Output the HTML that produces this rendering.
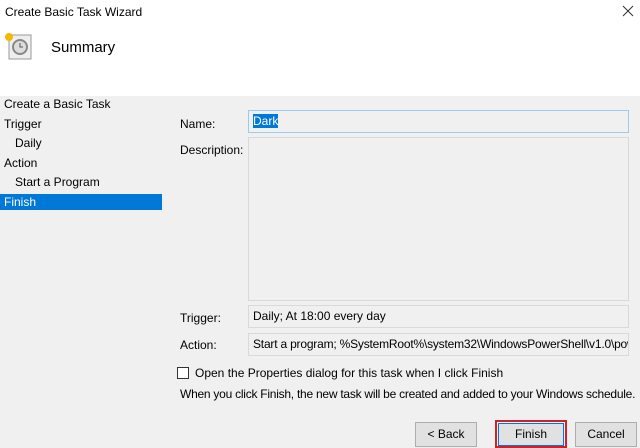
<!DOCTYPE html><html><head><style>
body{margin:0;width:640px;height:448px;overflow:hidden;background:#f0f0f0;font-family:"Liberation Sans",sans-serif;font-size:12px;color:#000;position:relative}
.a{position:absolute;white-space:nowrap}
.f{position:absolute;left:248px;width:381px;border:1px solid #d9d9d9;background:#f0f0f0;box-sizing:border-box;padding:3px 4px;white-space:nowrap;overflow:hidden}
.b{position:absolute;top:422px;height:25px;border:1px solid #adadad;background:#e1e1e1;box-sizing:border-box;text-align:center;line-height:23px}
</style></head><body>
<div class="a" style="left:0;top:0;width:640px;height:96px;background:#fff"></div>
<div class="a" style="left:5px;top:5px;font-size:12px">Create Basic Task Wizard</div>
<svg class="a" style="left:622px;top:5px" width="12" height="12"><path d="M1 1L11 11M11 1L1 11" stroke="#333" stroke-width="1"/></svg>
<svg class="a" style="left:3px;top:31px" width="30" height="30"><rect x="6" y="4" width="22" height="24" fill="#eee" stroke="#999"/><circle cx="17" cy="16" r="7" fill="#ddd" stroke="#888" stroke-width="2"/><path d="M17 12v4h3" stroke="#555" fill="none"/><circle cx="6" cy="6" r="4" fill="#f5b800"/></svg>
<div class="a" style="left:51px;top:39px;font-size:15px">Summary</div>
<div class="a" style="left:4px;top:97px">Create a Basic Task</div>
<div class="a" style="left:4px;top:117px">Trigger</div>
<div class="a" style="left:15px;top:136px">Daily</div>
<div class="a" style="left:4px;top:156px">Action</div>
<div class="a" style="left:15px;top:175px">Start a Program</div>
<div class="a" style="left:0;top:194px;width:162px;height:16px;background:#0078d7;color:#fff;line-height:16px;padding-left:4px;box-sizing:border-box">Finish</div>
<div class="a" style="left:180px;top:117px">Name:</div>
<div class="a" style="left:180px;top:143px">Description:</div>
<div class="a" style="left:180px;top:311px">Trigger:</div>
<div class="a" style="left:180px;top:338px">Action:</div>
<div class="f" style="top:110px;height:23px;border-color:#9ccbee"><span style="background:#0078d7;color:#fff">Dark</span></div>
<div class="f" style="top:137px;height:164px"></div>
<div class="f" style="top:305px;height:23px">Daily; At 18:00 every day</div>
<div class="f" style="top:333px;height:23px;letter-spacing:-0.2px">Start a program; %SystemRoot%\system32\WindowsPowerShell\v1.0\powershell.exe</div>
<div class="a" style="left:177px;top:367px;width:12px;height:12px;border:1px solid #333;background:#fff;box-sizing:border-box"></div>
<div class="a" style="left:195px;top:366px">Open the Properties dialog for this task when I click Finish</div>
<div class="a" style="left:180px;top:387px;letter-spacing:-0.25px">When you click Finish, the new task will be created and added to your Windows schedule.</div>
<div class="b" style="left:415px;width:62px">&lt; Back</div>
<div class="a" style="left:495px;top:420px;width:72px;height:28px;border:2px solid #d0202a;box-sizing:border-box"></div>
<div class="b" style="left:498px;width:66px;border:1px solid #0078d7;top:423px;height:23px;line-height:21px">Finish</div>
<div class="b" style="left:575px;width:62px">Cancel</div>
</body></html>
